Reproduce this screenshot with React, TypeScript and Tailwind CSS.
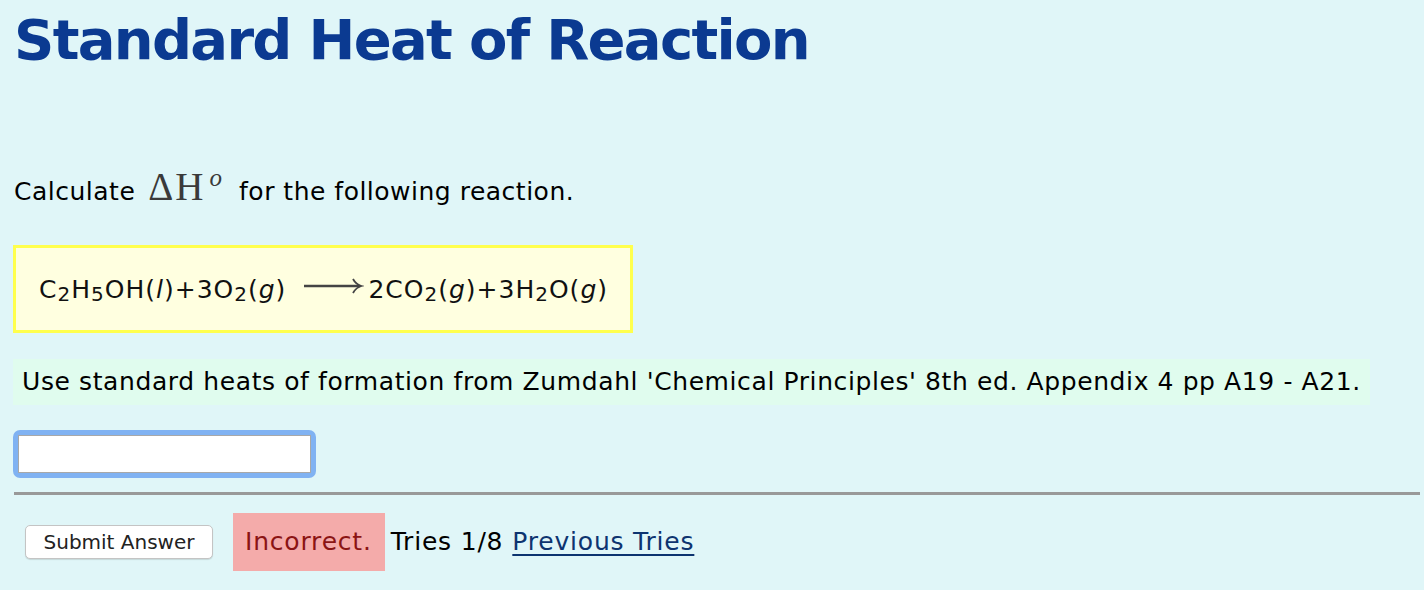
const sans = "font-['DejaVu_Sans','Verdana',sans-serif]";

// Long reaction arrow, thin shaft with a hooked head
const ReactionArrow = () => (
  <svg width="62" height="20" viewBox="0 0 62 20" className="mx-[1px] shrink-0 -translate-y-[3px]">
    <path d="M2 10 H58" stroke="#444" strokeWidth="2.4" fill="none" />
    <path d="M51 3 Q54 8.5 59.5 10 Q54 11.5 51 17" stroke="#444" strokeWidth="1.8" fill="none" />
  </svg>
);

const Sub = ({ children }: { children: React.ReactNode }) => (
  <sub className="text-[0.8em] align-[-0.25em]">{children}</sub>
);

export default function App() {
  return (
    <div className={`min-h-[590px] bg-[#e0f6f8] pl-[14px] pr-[4px] pt-[12px] text-black ${sans}`}>
      <h1 className="text-[56px] leading-[56px] font-bold text-[#0b3a91] tracking-[-1.7px]">
        Standard Heat of Reaction
      </h1>

      <p className="mt-[103px] text-[25px] leading-[32px] tracking-[0.5px] flex items-baseline">
        Calculate
        <span className="ml-[13px] mr-[17px] font-['Liberation_Serif',serif] text-[39px] leading-[32px] text-[#3a3a3a] tracking-normal">
          Δ<span className="ml-[2px]">H</span>
          <span className="ml-[6px] text-[25px] italic relative -top-[14px]">o</span>
        </span>
        for the following reaction.
      </p>

      <div className="mt-[37px] w-[620px] h-[88px] -ml-[1px] border-[3px] border-[#ffff4d] bg-[#ffffe0] pl-[23px] flex items-center">
        <span className="text-[25px] leading-none tracking-[1px] flex items-center text-[#111]">
          C<Sub>2</Sub>H<Sub>5</Sub>OH(<i>l</i>)+3O<Sub>2</Sub>(<i>g</i>)
          <span className="w-[15px]" />
          <ReactionArrow />
          <span className="w-[3px]" />
          2CO<Sub>2</Sub>(<i>g</i>)+3H<Sub>2</Sub>O(<i>g</i>)
        </span>
      </div>

      <div className="mt-[26px] -ml-[1px] inline-block bg-[#e0fcee] px-[9px] py-[7px] text-[25px] leading-[32px] tracking-[0.6px]">
        Use standard heats of formation from Zumdahl 'Chemical Principles' 8th ed. Appendix 4 pp A19 - A21.
      </div>

      <div className="mt-[25px] -ml-[1px] w-[303px] h-[48px] rounded-[7px] bg-[#80b2f2] p-[5px]">
        <input
          type="text"
          className="w-full h-full bg-white border border-[#a8a8a8] outline-none px-1 text-[20px]"
        />
      </div>

      <hr className="mt-[14px] border-0 border-t-[3px] border-[#999]" />

      <div className="mt-[18px] flex items-center text-[25px] tracking-[0.8px]">
        <button className="ml-[11px] h-[34px] w-[188px] rounded-[5px] border border-[#c4c4c4] bg-white text-[20px] tracking-normal text-[#222] shadow-[0_1px_1px_rgba(0,0,0,0.12)]">
          Submit Answer
        </button>
        <span className="ml-[20px] h-[58px] pl-[12px] pr-[13px] bg-[#f4abaa] text-[#8b1414] flex items-center">
          Incorrect.
        </span>
        <span className="ml-[6px]">Tries 1/8</span>
        <a href="#" className="ml-[9px] text-[#0d3470] underline underline-offset-[4px]">
          Previous Tries
        </a>
      </div>
    </div>
  );
}
